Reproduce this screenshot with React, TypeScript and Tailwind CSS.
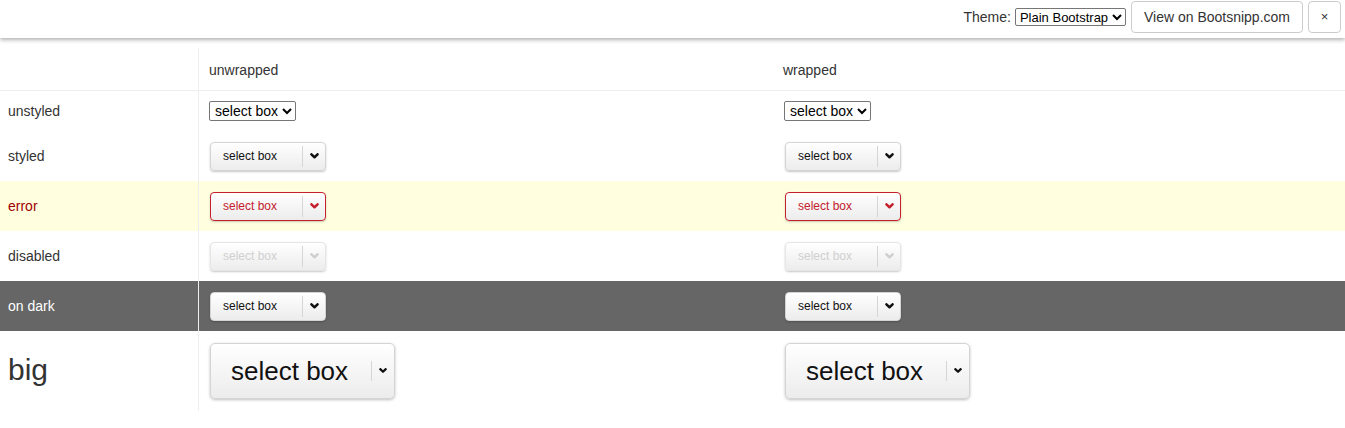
import React from "react";

type Variant = "normal" | "error" | "disabled";

const Chevron = ({ w, color }: { w: number; color: string }) => (
  <svg width={w} height={w * 0.66} viewBox="0 0 9 6" fill="none">
    <path d="M1.4 1.3 L4.5 4.3 L7.6 1.3" stroke={color} strokeWidth={2.5} strokeLinecap="round" strokeLinejoin="round" />
  </svg>
);

const StyledSelect = ({ variant = "normal", big = false }: { variant?: Variant; big?: boolean }) => {
  const border =
    variant === "error" ? "border-[#c4202d]" : variant === "disabled" ? "border-[#e6e6e6]" : "border-[#d4d4d4]";
  const text =
    variant === "error" ? "text-[#c4202d]" : variant === "disabled" ? "text-[#d0d0d0]" : "text-[#111]";
  const arrow = variant === "error" ? "#c4202d" : variant === "disabled" ? "#cfcfcf" : "#111";

  if (big) {
    return (
      <div className={`ml-px flex h-[56px] w-[185px] items-center rounded-[5px] border ${border} bg-gradient-to-b from-white to-[#ececec] shadow-[0_1px_3px_rgba(0,0,0,0.25)]`}>
        <span className={`flex-1 pl-[20px] text-[26px] leading-none ${text}`}>select box</span>
        <span className="h-[20px] w-px bg-[#d6d6d6]" />
        <span className="flex w-[22px] justify-center">
          <Chevron w={8} color={arrow} />
        </span>
      </div>
    );
  }

  return (
    <div className={`ml-px flex h-[29px] w-[116px] items-center rounded-[4px] border ${border} bg-gradient-to-b from-white to-[#ececec] shadow-[0_1px_2px_rgba(0,0,0,0.22)]`}>
      <span className={`flex-1 pl-[12px] text-[12px] leading-none ${text}`}>select box</span>
      <span className="h-[21px] w-px bg-[#d6d6d6]" />
      <span className="flex w-[22px] justify-center">
        <Chevron w={9} color={arrow} />
      </span>
    </div>
  );
};

const NativeSelect = () => (
  <select className="h-[20px] rounded-[2px] border border-[#767676] bg-white pl-px text-[14px] text-black">
    <option>select box</option>
  </select>
);

const rows = [
  { label: "unstyled", h: "h-[40px]", bg: "", labelCls: "text-[#333]", cell: <NativeSelect /> },
  { label: "styled", h: "h-[50px]", bg: "", labelCls: "text-[#333]", cell: <StyledSelect /> },
  { label: "error", h: "h-[50px]", bg: "bg-[#ffffe0]", labelCls: "text-[#a00000]", cell: <StyledSelect variant="error" /> },
  { label: "disabled", h: "h-[50px]", bg: "", labelCls: "text-[#333]", cell: <StyledSelect variant="disabled" /> },
  { label: "on dark", h: "h-[50px]", bg: "bg-[#666666]", labelCls: "text-white", cell: <StyledSelect /> },
  { label: "big", h: "h-[80px]", bg: "", labelCls: "text-[#333] text-[30px] pb-[3px]", cell: <StyledSelect big /> },
];

export default function App() {
  return (
    <div className="min-h-screen bg-white font-['Liberation_Sans',Arial,sans-serif] text-[14px] text-[#333]">
      {/* top bar */}
      <div className="relative z-10 flex h-[38px] items-start justify-end gap-[5px] bg-white pr-[4px] pt-px shadow-[0_2px_4px_rgba(0,0,0,0.3)]">
        <div className="flex h-[32px] items-center gap-[4px]">
          <span className="text-[14px] text-[#333]">Theme:</span>
          <select className="h-[18px] rounded-[2px] border border-[#767676] bg-white text-[13px] text-black">
            <option>Plain Bootstrap</option>
          </select>
        </div>
        <button className="h-[32px] rounded-[4px] border border-[#ccc] bg-white px-[12px] text-[14px] text-[#333]">
          View on Bootsnipp.com
        </button>
        <button className="h-[32px] w-[33px] rounded-[4px] border border-[#ccc] bg-white text-[13px] text-[#333]">
          ×
        </button>
      </div>

      {/* table */}
      <div className="mt-[10px]">
        <div className="grid h-[43px] grid-cols-[199px_574px_1fr] items-center border-b border-[#eee]">
          <div className="h-full border-r border-[#eee]" />
          <div className="pl-[10px] pt-[3px]">unwrapped</div>
          <div className="pl-[10px] pt-[3px]">wrapped</div>
        </div>
        {rows.map((r, i) => (
          <div key={i} className={`grid grid-cols-[199px_574px_1fr] ${r.h} ${r.bg}`}>
            <div className={`flex items-center border-r border-[#eee] pl-[8px] ${r.labelCls}`}>{r.label}</div>
            <div className="flex items-center pl-[10px]">{r.cell}</div>
            <div className="flex items-center pl-[11px]">{r.cell}</div>
          </div>
        ))}
      </div>
    </div>
  );
}
